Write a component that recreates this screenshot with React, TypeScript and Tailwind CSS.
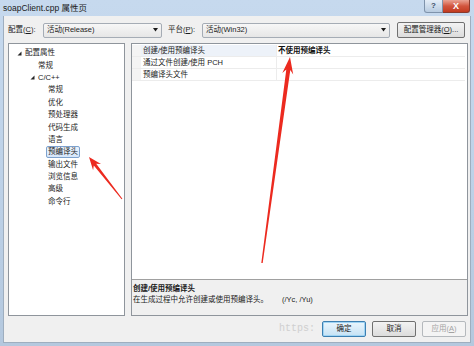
import React from 'react';

const FONT = { fontFamily: '"Segoe UI", "Liberation Sans", "Noto Sans CJK SC", sans-serif' };

type Pt = [number, number];

// tapered red annotation arrow, computed from tail/head points
const arrowPoints = (tail: Pt, head: Pt, w0: number, w1: number, headLen: number, headW: number) => {
  const dx = head[0] - tail[0];
  const dy = head[1] - tail[1];
  const len = Math.hypot(dx, dy);
  const ux = dx / len;
  const uy = dy / len;
  const nx = -uy;
  const ny = ux;
  const bx = head[0] - ux * headLen;
  const by = head[1] - uy * headLen;
  const nb = headLen * 0.25;
  const pts: Pt[] = [
    [tail[0] + (nx * w0) / 2, tail[1] + (ny * w0) / 2],
    [bx + ux * nb + (nx * w1) / 2, by + uy * nb + (ny * w1) / 2],
    [bx + (nx * headW) / 2, by + (ny * headW) / 2],
    head,
    [bx - (nx * headW) / 2, by - (ny * headW) / 2],
    [bx + ux * nb - (nx * w1) / 2, by + uy * nb - (ny * w1) / 2],
    [tail[0] - (nx * w0) / 2, tail[1] - (ny * w0) / 2],
  ];
  return pts.map((p) => `${p[0].toFixed(1)},${p[1].toFixed(1)}`).join(' ');
};

const Caret: React.FC = () => (
  <svg width="5" height="4" viewBox="0 0 5 4" className="shrink-0">
    <path d="M0 0 H5 L2.5 3.5 Z" fill="#1a1a1a" />
  </svg>
);

const Expander: React.FC = () => (
  <svg width="5" height="5" viewBox="0 0 5 5" className="shrink-0">
    <path d="M4.5 0.5 V4.5 H0.5 Z" fill="#262626" />
  </svg>
);

const Combo: React.FC<{ text: string; width: string }> = ({ text, width }) => (
  <div
    className={`${width} h-[15px] flex items-center justify-between pl-[3px] pr-[3px] border border-[#a5acb5] rounded-[2px] bg-gradient-to-b from-[#f7f7f7] to-[#e6e6e6]`}
  >
    <span className="text-[7.5px] text-[#1b1b1b] leading-none">{text}</span>
    <Caret />
  </div>
);

type TreeItem = { label: string; level: 0 | 1 | 2; expand?: boolean; selected?: boolean };

const tree: TreeItem[] = [
  { label: '配置属性', level: 0, expand: true },
  { label: '常规', level: 1 },
  { label: 'C/C++', level: 1, expand: true },
  { label: '常规', level: 2 },
  { label: '优化', level: 2 },
  { label: '预处理器', level: 2 },
  { label: '代码生成', level: 2 },
  { label: '语言', level: 2 },
  { label: '预编译头', level: 2, selected: true },
  { label: '输出文件', level: 2 },
  { label: '浏览信息', level: 2 },
  { label: '高级', level: 2 },
  { label: '命令行', level: 2 },
];

const indent = ['pl-[8px]', 'pl-[21px]', 'pl-[39px]'];

const rows = [
  { name: '创建/使用预编译头', value: '不使用预编译头', active: true },
  { name: '通过文件创建/使用 PCH', value: '' },
  { name: '预编译头文件', value: '' },
];

const App: React.FC = () => {
  return (
    <div style={FONT} className="relative w-[474px] h-[346px] overflow-hidden flex flex-col bg-gradient-to-b from-[#c6d9ee] via-[#bed2e8] to-[#b4c8de]">
      {/* Title bar */}
      <div className="h-[16px] shrink-0 flex items-start justify-between">
        <span className="pl-[3px] pt-[3px] text-[8.5px] leading-[10px] text-[#1a1a1a]">soapClient.cpp 属性页</span>
        <div className="flex mr-[4px]">
          <div className="w-[19px] h-[13px] flex items-center justify-center border border-[#7f93ab] border-t-0 rounded-bl-[3px] bg-gradient-to-b from-[#e4edf7] to-[#b8cbe0] text-[8px] font-bold text-[#3c4e66] leading-none">
            ?
          </div>
          <div className="w-[27px] h-[13px] flex items-center justify-center border border-[#8a3a2d] border-t-0 border-l-0 rounded-br-[3px] bg-gradient-to-b from-[#e9a293] via-[#d2553e] to-[#c23a1f] text-[9px] font-bold text-white leading-none">
            X
          </div>
        </div>
      </div>

      {/* Body */}
      <div className="flex-1 mx-[3px] mb-[3px] bg-[#f0f0f0] border border-t-0 border-[#9eaebf] flex flex-col pl-[4px] pr-[1px] pt-[6px]">
        {/* Config / platform row */}
        <div className="h-[16px] flex items-center">
          <span className="w-[35px] text-[7.5px] leading-none text-[#1b1b1b]">
            配置(<span className="underline">C</span>):
          </span>
          <Combo text="活动(Release)" width="w-[119px]" />
          <span className="ml-[6px] w-[34px] text-[7.5px] leading-none text-[#1b1b1b]">
            平台(<span className="underline">P</span>):
          </span>
          <Combo text="活动(Win32)" width="w-[188px]" />
          <div className="ml-[7px] w-[68px] h-[16px] flex items-center justify-center border border-[#707070] rounded-[2px] bg-gradient-to-b from-[#f3f3f3] to-[#dcdcdc] text-[7.5px] leading-none text-[#1b1b1b]">
            配置管理器(<span className="underline">O</span>)...
          </div>
        </div>

        {/* Panels */}
        <div className="mt-[5px] h-[273px] flex gap-[6px]">
          {/* Tree */}
          <div className="w-[117px] bg-white border border-[#8f959c] pt-[3px]">
            {tree.map((t, i) => (
              <div key={i} className={`h-[12.4px] flex items-center ${indent[t.level]}`}>
                {t.expand ? (
                  <span className="w-[8px] flex items-center">
                    <Expander />
                  </span>
                ) : null}
                <span
                  className={`text-[7.5px] leading-[10px] text-[#1b1b1b] ${
                    t.selected
                      ? 'px-[1px] -ml-[2px] border border-[#7da2ce] rounded-[2px] bg-gradient-to-b from-[#eaf3fd] to-[#d5e6fa]'
                      : ''
                  } ${t.expand ? '' : t.level === 1 ? 'ml-[8px]' : ''}`}
                >
                  {t.label}
                </span>
              </div>
            ))}
          </div>

          {/* Property grid */}
          <div className="w-[337px] border border-[#8f959c] flex flex-col">
            <div className="flex-1 bg-white pt-[1px] pr-[2px]">
              {rows.map((r, i) => (
                <div key={i} className="h-[12px] flex border-b border-[#ececec]">
                  <div className="w-[9px] bg-[#f4f4f4]" />
                  <div
                    className={`w-[136px] pl-[2px] flex items-center border-r border-[#ececec] ${
                      r.active ? 'bg-[#edf2f9]' : ''
                    }`}
                  >
                    <span className="text-[7.5px] leading-none text-[#1b1b1b]">{r.name}</span>
                  </div>
                  <div className="flex-1 pl-[1px] flex items-center">
                    <span className="text-[7.5px] leading-none font-bold text-[#111]">{r.value}</span>
                  </div>
                </div>
              ))}
            </div>
            <div className="h-[36px] border-t border-[#a0a0a0] bg-[#f0f0f0] pl-[1px] pt-[3px]">
              <div className="text-[7.5px] leading-[11px] font-bold text-[#1b1b1b]">创建/使用预编译头</div>
              <div className="flex text-[7.5px] leading-[11px] text-[#1b1b1b]">
                <span className="w-[149px]">在生成过程中允许创建或使用预编译头。</span>
                <span>(/Yc, /Yu)</span>
              </div>
            </div>
          </div>
        </div>

        {/* Buttons */}
        <div className="relative mt-[5px] h-[16px] flex justify-end items-center gap-[6px] pr-[3px]">
          <span
            className="mr-[1px] text-[10px] leading-none text-[#cfcfcf]"
            style={{ fontFamily: '"Liberation Mono", monospace' }}
          >
            https:
          </span>
          <div className="w-[44px] h-[16px] flex items-center justify-center border border-[#3c7fb1] rounded-[2px] bg-gradient-to-b from-[#eaf6fd] to-[#c6e2f4] shadow-[inset_0_0_0_1px_#9fd4f4] text-[7.5px] leading-none text-[#1b1b1b]">
            确定
          </div>
          <div className="w-[44px] h-[16px] flex items-center justify-center border border-[#707070] rounded-[2px] bg-gradient-to-b from-[#f3f3f3] to-[#dcdcdc] text-[7.5px] leading-none text-[#1b1b1b]">
            取消
          </div>
          <div className="w-[44px] h-[16px] flex items-center justify-center border border-[#b5b9bd] rounded-[2px] bg-[#f4f4f4] text-[7.5px] leading-none text-[#a3a3a3]">
            应用(<span className="underline">A</span>)
          </div>
        </div>
      </div>

      {/* Red annotation arrows */}
      <svg className="absolute inset-0 pointer-events-none" width="474" height="346" viewBox="0 0 474 346">
        <polygon points={arrowPoints([122, 199], [89, 157], 1, 3, 13, 10)} fill="#ec2a1f" />
        <polygon points={arrowPoints([262, 263], [290, 57], 1.5, 4, 17, 11)} fill="#ec2a1f" />
      </svg>
    </div>
  );
};

export default App;
